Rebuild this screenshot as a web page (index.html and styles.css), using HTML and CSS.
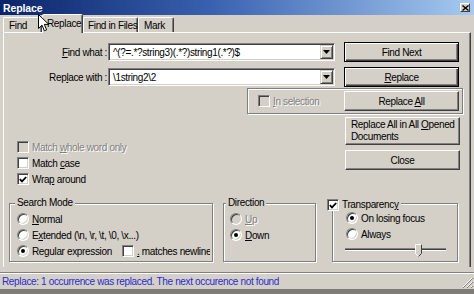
FILE: index.html
```html
<!DOCTYPE html>
<html lang="en">

<head>
    <meta charset="UTF-8">
    <title>Replace</title>
    <link rel="stylesheet" href="styles.css">
</head>

<body>
    <div id="dialog">
        <div class="titlebar">
            <span class="title">Replace</span>
            <span class="close">
                <svg width="7" height="6" viewBox="0 0 7 6"><path d="M0.5 0.5L6.5 5.5M6.5 0.5L0.5 5.5" stroke="#000" stroke-width="1.4"/></svg>
            </span>
        </div>

        <ul class="tabs">
            <li class="tab tab-find">Find</li>
            <li class="tab tab-replace active">Replace</li>
            <li class="tab tab-files">Find in Files</li>
            <li class="tab tab-mark">Mark</li>
        </ul>

        <div class="panel">
            <div class="row row-find">
                <span class="field-label"><u>F</u>ind what :</span>
                <div class="combo">
                    <span class="combo-text">^(?=.*?string3)(.*?)string1(.*?)$</span>
                    <span class="combo-btn"><svg width="7" height="4" viewBox="0 0 7 4"><path d="M0 0H7L3.5 4Z"/></svg></span>
                </div>
                <button class="btn btn-default">Find Next</button>
            </div>

            <div class="row row-replace">
                <span class="field-label">Rep<u>l</u>ace with :</span>
                <div class="combo">
                    <span class="combo-text">\1string2\2</span>
                    <span class="combo-btn"><svg width="7" height="4" viewBox="0 0 7 4"><path d="M0 0H7L3.5 4Z"/></svg></span>
                </div>
                <button class="btn btn-default"><u>R</u>eplace</button>
            </div>

            <div class="sel-group">
                <span class="check disabled"><i class="box"></i><span class="dim"><u>I</u>n selection</span></span>
                <button class="btn">Replace <u>A</u>ll</button>
            </div>

            <div class="row row-options">
                <div class="options">
                    <div class="check disabled"><i class="box"></i><span class="dim">Match <u>w</u>hole word only</span></div>
                    <div class="check"><i class="box"></i><span>Match <u>c</u>ase</span></div>
                    <div class="check"><i class="box"><svg width="8" height="7" viewBox="0 0 8 7"><path d="M0.8 3.2L3 5.4L7.2 1" stroke="#000" stroke-width="1.8" fill="none"/></svg></i><span>Wra<u>p</u> around</span></div>
                </div>
                <div class="side-buttons">
                    <button class="btn btn-tall">Replace All in All <u>O</u>pened<br>Documents</button>
                    <button class="btn">Close</button>
                </div>
            </div>

            <div class="row row-groups">
                <fieldset class="group group-mode">
                    <legend>Search Mode</legend>
                    <div class="radio"><i class="dot"></i><span><u>N</u>ormal</span></div>
                    <div class="radio"><i class="dot"></i><span>E<u>x</u>tended (\n, \r, \t, \0, \x...)</span></div>
                    <div class="radio radio-regex">
                        <span class="radio-main"><i class="dot on"></i><span>Regular expression</span></span>
                        <span class="check"><i class="box"></i><span><u>.</u> matches newline</span></span>
                    </div>
                </fieldset>

                <fieldset class="group group-dir">
                    <legend>Direction</legend>
                    <div class="radio disabled"><i class="dot"></i><span class="dim"><u>U</u>p</span></div>
                    <div class="radio"><i class="dot on"></i><span><u>D</u>own</span></div>
                </fieldset>

                <fieldset class="group group-trans">
                    <legend>
                        <span class="check"><i class="box"><svg width="8" height="7" viewBox="0 0 8 7"><path d="M0.8 3.2L3 5.4L7.2 1" stroke="#000" stroke-width="1.8" fill="none"/></svg></i><span>Transparenc<u>y</u></span></span>
                    </legend>
                    <div class="radio"><i class="dot on"></i><span>On losing focus</span></div>
                    <div class="radio"><i class="dot"></i><span>Always</span></div>
                    <div class="slider">
                        <svg width="102" height="14" viewBox="0 0 102 14">
                            <rect x="0" y="5" width="101" height="1" fill="#808080"/>
                            <rect x="0" y="6" width="101" height="1" fill="#404040"/>
                            <rect x="0" y="7" width="101" height="1" fill="#ffffff"/>
                            <path d="M70.5 1.5H76.5V10.5L73.5 13.5L70.5 10.5Z" fill="#d4d0c8" stroke="#ffffff"/>
                            <path d="M76.5 1.5V10.5L73.5 13.5" fill="none" stroke="#404040"/>
                        </svg>
                    </div>
                </fieldset>
            </div>
        </div>

        <div class="status">
            <span class="status-text">Replace: 1 occurrence was replaced. The next occurence not found</span>
            <svg class="grip" width="11" height="11" viewBox="0 0 11 11">
                <path d="M10 1L1 10M10 5L5 10M10 9L9 10" stroke="#ffffff" stroke-width="1"/>
                <path d="M11 1L1 11M11 5L5 11M11 9L9 11" stroke="#808080" stroke-width="1"/>
            </svg>
        </div>

        <svg class="cursor" width="12" height="18" viewBox="0 0 12 18">
            <path d="M0.5 0.5V14.5L4 11.2L6.4 16.8L8.6 15.8L6.3 10.4H10.8Z" fill="#fff" stroke="#000"/>
        </svg>
    </div>
</body>

</html>
```

FILE: styles.css
```css
* {
    box-sizing: border-box;
}

body {
    margin: 0;
    width: 474px;
    height: 294px;
    overflow: hidden;
    background: #d4d0c8;
    font-size: 10px;
    font-family: "Liberation Sans", Arial, sans-serif;
    letter-spacing: -0.35px;
    color: #000;
}

u {
    text-decoration: underline;
}

#dialog {
    position: relative;
    height: 294px;
    display: flex;
    flex-direction: column;
}

/* title bar */
.titlebar {
    height: 15px;
    flex-shrink: 0;
    display: flex;
    align-items: center;
    justify-content: space-between;
    padding: 0 4px 0 3px;
    background: linear-gradient(to right, #0a246a, #3a62b0 45%, #a6caf0);
    color: #fff;
    font-weight: bold;
    font-size: 10.5px;
    letter-spacing: -0.1px;
}

.close {
    width: 10px;
    height: 9px;
    display: flex;
    align-items: center;
    justify-content: center;
    background: #d4d0c8;
    border: 1px solid;
    border-color: #fff #404040 #404040 #fff;
}

/* tabs */
.tabs {
    list-style: none;
    margin: 0;
    padding: 0 0 0 3px;
    height: 17px;
    flex-shrink: 0;
    display: flex;
    align-items: flex-end;
}

.tab {
    height: 15px;
    padding: 1px 0 0 5px;
    line-height: 13px;
    white-space: nowrap;
    border: 1px solid;
    border-bottom: none;
    border-color: #fff #404040 transparent #fff;
    box-shadow: inset -1px 0 #808080;
    border-radius: 2px 2px 0 0;
}

.tab-find {
    width: 39px;
}

.tab-replace {
    width: 41px;
}

.tab-files {
    width: 55px;
    padding-left: 4px;
}

.tab-mark {
    width: 36px;
}

.tab.active {
    position: relative;
    z-index: 1;
    height: 19px;
    margin-bottom: -1px;
    padding-left: 4px;
    line-height: 15px;
    background: #d4d0c8;
}

/* panel */
.panel {
    height: 235px;
    flex-shrink: 0;
    margin: 0 3px;
    padding: 0 10px 0 0;
    border: 1px solid;
    border-bottom: none;
    border-color: #fff #404040 transparent #fff;
    box-shadow: inset -1px 0 #808080;
}

.row {
    display: flex;
}

.row-find {
    height: 20px;
    margin-top: 9px;
    align-items: center;
}

.row-replace {
    height: 20px;
    margin-top: 5px;
    align-items: center;
}

.field-label {
    width: 104px;
    padding-right: 1px;
    text-align: right;
}

.combo {
    width: 227px;
    height: 18px;
    margin-right: 9px;
    padding: 1px;
    display: flex;
    align-items: center;
    background: #fff;
    border: 1px solid;
    border-color: #808080 #fff #fff #808080;
    box-shadow: inset 1px 1px #404040, inset -1px -1px #d4d0c8;
}

.combo-text {
    flex: 1;
    padding-left: 3px;
    white-space: nowrap;
    overflow: hidden;
}

.combo-btn {
    width: 13px;
    height: 14px;
    display: flex;
    align-items: center;
    justify-content: center;
    background: #d4d0c8;
    border: 1px solid;
    border-color: #d4d0c8 #404040 #404040 #d4d0c8;
    box-shadow: inset 1px 1px #fff, inset -1px -1px #808080;
}

/* buttons */
.btn {
    width: 115px;
    height: 20px;
    padding: 0;
    font: inherit;
    letter-spacing: inherit;
    color: #000;
    text-align: center;
    background: #d4d0c8;
    border: 1px solid;
    border-color: #fff #404040 #404040 #fff;
    box-shadow: inset -1px -1px #808080;
}

.btn-default {
    border-color: #000;
    box-shadow: inset 1px 1px #fff, inset -1px -1px #404040, inset -2px -2px #808080;
}

.btn-tall {
    height: 28px;
    padding-left: 5px;
    line-height: 12px;
    text-align: left;
}

/* in selection group */
.sel-group {
    width: 216px;
    height: 26px;
    margin: 1px 0 0 243px;
    padding: 0 3px 0 10px;
    display: flex;
    align-items: center;
    justify-content: space-between;
    border: 1px solid #808080;
    box-shadow: inset 1px 1px #fff, 1px 1px #fff;
}

/* checkboxes and radios */
.check,
.radio,
.radio-main {
    height: 16px;
    display: flex;
    align-items: center;
    white-space: nowrap;
}

.box {
    width: 12px;
    height: 12px;
    margin-right: 3px;
    flex-shrink: 0;
    display: flex;
    align-items: center;
    justify-content: center;
    background: #fff;
    border: 1px solid;
    border-color: #808080 #fff #fff #808080;
    box-shadow: inset 1px 1px #404040, inset -1px -1px #d4d0c8;
}

.disabled .box,
.disabled .dot {
    background: #d4d0c8;
}

.dim {
    color: #808080;
    text-shadow: 1px 1px #fff;
}

.dot {
    width: 12px;
    height: 12px;
    margin-right: 3px;
    flex-shrink: 0;
    display: flex;
    align-items: center;
    justify-content: center;
    background: #fff;
    border-radius: 50%;
    border: 1px solid;
    border-color: #808080 #fff #fff #808080;
    box-shadow: inset 1px 1px #404040, inset -1px -1px #d4d0c8;
}

.dot.on::after {
    content: "";
    width: 4px;
    height: 4px;
    border-radius: 50%;
    background: #000;
}

.row-options {
    height: 73px;
}

.options {
    flex: 1;
    padding: 25px 0 0 13px;
}

.side-buttons {
    width: 115px;
    padding-top: 3px;
    display: flex;
    flex-direction: column;
    gap: 5px;
}

/* bottom group boxes */
.row-groups {
    margin-top: 10px;
    align-items: flex-start;
}

.group {
    height: 65px;
    margin: 0;
    border: 1px solid #808080;
    box-shadow: inset 1px 1px #fff, 1px 1px #fff;
}

.group legend {
    height: 12px;
    padding: 0 2px;
    line-height: 12px;
    background: #d4d0c8;
}

.group-mode {
    width: 204px;
    margin-left: 5px;
    padding: 2px 0 0 5px;
}

.group-mode .radio {
    padding-left: 2px;
}

.radio-regex {
    width: 195px;
    overflow: hidden;
}

.radio-main {
    width: 105px;
    flex-shrink: 0;
}

.group-dir {
    width: 93px;
    margin-left: 10px;
    padding: 2px 0 0 2px;
}

.group-dir .radio {
    padding-left: 4px;
}

.group-trans {
    width: 126px;
    margin-left: 16px;
    padding: 1px 0 0 0;
}

.group-trans legend {
    margin-left: -6px;
    padding: 0 2px 0 0;
}

.group-trans .radio {
    padding-left: 13px;
}

.slider {
    height: 16px;
    padding-left: 12px;
    display: flex;
    align-items: center;
}

/* status bar */
.status {
    height: 22px;
    flex-shrink: 0;
    margin-top: 5px;
    padding-left: 2px;
    display: flex;
    align-items: flex-end;
    justify-content: space-between;
    border-top: 1px solid #808080;
    box-shadow: inset 0 1px #fff;
    border-bottom: 5px solid #7d7b76;
}

.status-text {
    color: #2a2ad0;
    line-height: 14px;
}

.grip {
    margin-right: 1px;
    margin-bottom: 1px;
}

.cursor {
    position: absolute;
    left: 38px;
    top: 14px;
    z-index: 2;
}
```
